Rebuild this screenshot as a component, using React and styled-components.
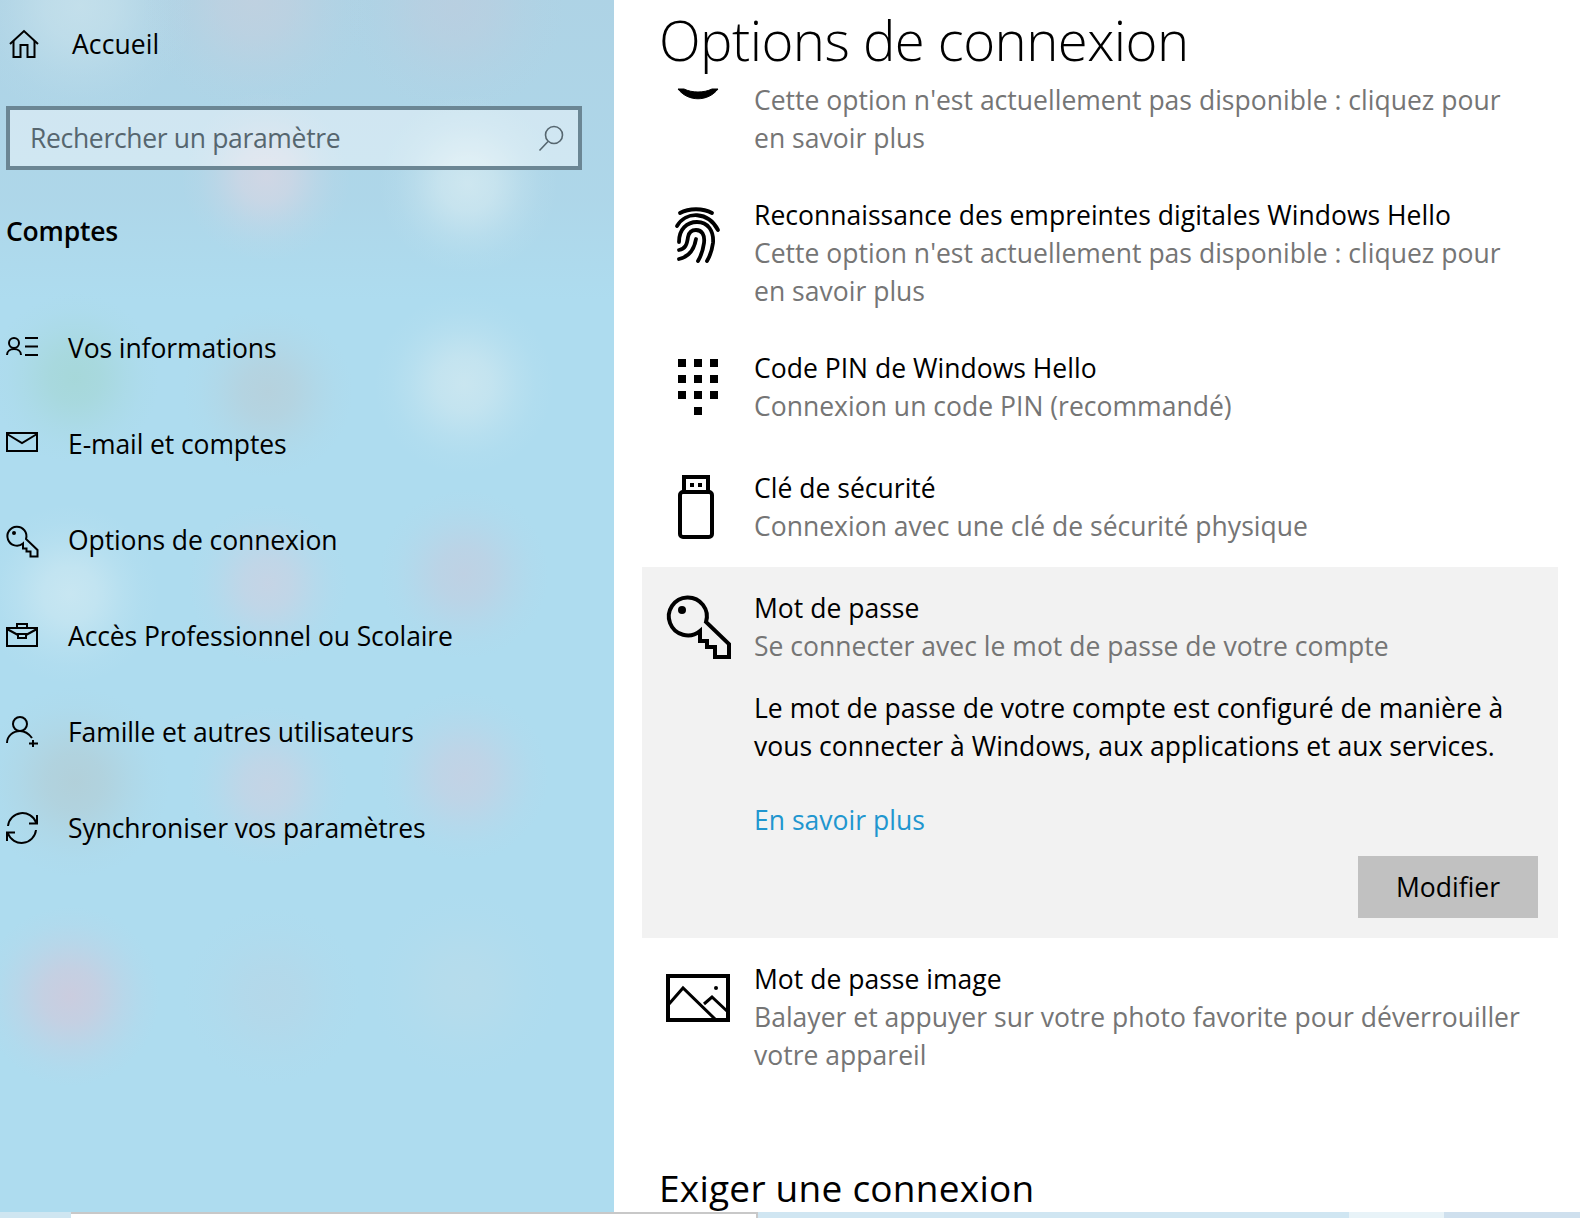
import React from 'react'
import styled, { createGlobalStyle } from 'styled-components'

const FONT = '"Open Sans", "Noto Sans", sans-serif'

const blobs = [
  [266, 176, '226,214,226', 0.65, 85],
  [468, 184, '216,236,242', 0.75, 90],
  [255, 0, '198,208,222', 0.7, 115],
  [455, 6, '190,205,222', 0.65, 110],
  [80, 6, '200,226,236', 0.8, 115],
  [75, 378, '160,212,200', 0.55, 85],
  [268, 392, '186,204,212', 0.65, 85],
  [464, 384, '208,232,240', 0.8, 90],
  [70, 594, '204,232,242', 0.85, 90],
  [268, 584, '210,208,224', 0.65, 80],
  [464, 574, '204,200,218', 0.55, 85],
  [75, 782, '180,200,204', 0.6, 95],
  [268, 786, '208,208,224', 0.65, 80],
  [464, 776, '208,204,222', 0.6, 85],
  [70, 996, '218,196,214', 0.65, 90],
  [272, 996, '186,212,228', 0.5, 90],
  [464, 986, '190,220,232', 0.5, 95],
]

// soft falloff so no blob shows an edge
const softBlob = ([x, y, rgb, alpha, size]) => {
  const stops = [
    [0, 1],
    [30, 0.78],
    [60, 0.32],
    [80, 0.1],
    [100, 0],
  ]
    .map(([at, k]) => `rgba(${rgb},${(alpha * k).toFixed(3)}) ${at}%`)
    .join(', ')
  return `radial-gradient(circle ${size}px at ${x}px ${y}px, ${stops})`
}

const sidebarBackground = [
  ...blobs.map(softBlob),
  'linear-gradient(to bottom, rgba(174,208,226,.75), rgba(174,208,226,.45) 200px, rgba(174,220,239,0) 300px)',
].join(', ')

const GlobalStyle = createGlobalStyle`
  html, body {
    margin: 0;
    padding: 0;
    background: #ffffff;
  }
  body {
    font-family: ${FONT};
    color: #000000;
  }
`

const Page = styled.div`
  width: 1580px;
  height: 1218px;
  display: flex;
  flex-direction: column;
  overflow: hidden;
`

const Window = styled.div`
  flex: 1;
  min-height: 0;
  display: flex;
`

const Sidebar = styled.aside`
  width: 614px;
  flex-shrink: 0;
  padding-left: 6px;
  box-sizing: border-box;
  background-color: #aedcef;
  background-image: ${sidebarBackground};
`

const HomeRow = styled.div`
  height: 88px;
  display: flex;
  align-items: center;
  gap: 33px;
  padding-left: 3px;
  font-size: 26.5px;
  letter-spacing: 0.1px;
`

const SearchBox = styled.div`
  width: 576px;
  height: 64px;
  margin-top: 18px;
  box-sizing: border-box;
  display: flex;
  align-items: center;
  justify-content: space-between;
  padding: 0 14px 0 20px;
  border: 4px solid #6b8694;
  background: rgba(255, 255, 255, 0.42);
  color: #56666f;
  font-size: 26.5px;
  letter-spacing: -0.33px;
`

const SectionLabel = styled.div`
  margin-top: 43px;
  line-height: 37px;
  font-size: 26.5px;
  font-weight: 600;
  letter-spacing: -0.2px;
`

const NavList = styled.nav`
  margin-top: 51px;
  display: flex;
  flex-direction: column;
`

const NavRow = styled.div`
  height: 96px;
  box-sizing: border-box;
  padding-bottom: 2px;
  display: flex;
  align-items: center;
  font-size: 26.5px;
  letter-spacing: -0.1px;
`

const NavIcon = styled.span`
  width: 62px;
  flex-shrink: 0;
  display: flex;
  align-items: center;
  margin-top: ${(p) => p.$shift || 0}px;
`

const Main = styled.main`
  flex: 1;
  min-width: 0;
  padding-left: 28px;
  overflow: hidden;
`

const Title = styled.h1`
  height: 81px;
  margin: 0 0 0 17px;
  line-height: 81px;
  font-size: 54.5px;
  font-weight: 300;
  letter-spacing: -0.55px;
`

const Option = styled.section`
  width: 916px;
  display: flex;
  margin-top: ${(p) => p.$gap || 0}px;
`

const OptionIcon = styled.div`
  width: 112px;
  flex-shrink: 0;
  box-sizing: border-box;
  display: flex;
  justify-content: center;
  align-items: flex-start;
  padding-top: ${(p) => p.$top}px;
  padding-right: ${(p) => p.$nudge || 0}px;
`

const OptionBody = styled.div`
  flex: 1;
  min-width: 0;
  line-height: 38px;
  font-size: 26.5px;
  letter-spacing: 0.02px;
  white-space: nowrap;
`

const OptionName = styled.div``

const OptionHint = styled.div`
  color: #757575;
`

const Selected = styled.div`
  width: 916px;
  height: 371px;
  margin-top: 22px;
  padding-top: 22px;
  box-sizing: border-box;
  background: #f2f2f2;
`

const Explain = styled.p`
  margin: 24px 0 0;
`

const LearnMore = styled.div`
  margin-top: 36px;
  color: #2196cf;
`

const ButtonRow = styled.div`
  margin-top: 17px;
  padding-right: 20px;
  display: flex;
  justify-content: flex-end;
`

const ChangeButton = styled.button`
  width: 180px;
  height: 62px;
  padding: 0;
  border: 0;
  background: #c1c1c1;
  color: #000000;
  font-family: ${FONT};
  font-size: 26.5px;
`

const SubTitle = styled.h2`
  margin: 89px 0 0 17px;
  line-height: 50px;
  font-size: 37px;
  font-weight: 400;
  letter-spacing: 0.25px;
`

const Taskbar = styled.div`
  height: 6px;
  flex-shrink: 0;
  display: flex;
  background: #cfe6f1;
`

const TaskSlot = styled.div`
  width: ${(p) => p.$width}px;
  flex-shrink: 0;
  box-sizing: border-box;
  background: ${(p) => p.$colour};
  border-top: ${(p) => (p.$framed ? '2px solid #c8c8c8' : '0')};
  border-right: ${(p) => (p.$framed ? '2px solid #c8c8c8' : '0')};
`

const Svg = styled.svg`
  display: block;
  flex-shrink: 0;
  fill: none;
  stroke: currentColor;
  overflow: visible;
`

const HomeIcon = () => (
  <Svg width="30" height="28" viewBox="0 0 30 28" strokeWidth="2">
    <path d="M1 14 15 1l14 13" />
    <path d="M4.500 11v16h7V15h7v12h7V11" />
  </Svg>
)

const SearchIcon = () => (
  <Svg width="26" height="26" viewBox="0 0 26 26" strokeWidth="1.6">
    <circle cx="16" cy="10" r="8.500" />
    <path d="M10 16.500 1.500 25.500" />
  </Svg>
)

const PersonListIcon = () => (
  <Svg width="32" height="19" viewBox="0 0 32 19" strokeWidth="2">
    <circle cx="8" cy="6" r="5" />
    <path d="M1 18c0-8 14-8 14 0M19 1h13M19 9.500h13M19 18h13" />
  </Svg>
)

const MailIcon = () => (
  <Svg width="32" height="20" viewBox="0 0 32 20" strokeWidth="2">
    <rect x="1" y="1" width="30" height="18" />
    <path d="M1 2 16 11 31 2" />
  </Svg>
)

const KeyIcon = ({ size }) => (
  <Svg width={size} height={size} viewBox="0 0 64 64" strokeWidth="4">
    <path d="M40 28A19 19 0 1 0 34 37v10h7v6h8v10h14V50Z" />
    <circle cx="16" cy="16" r="4" fill="currentColor" stroke="none" />
  </Svg>
)

const BriefcaseIcon = () => (
  <Svg width="32" height="24" viewBox="0 0 32 24" strokeWidth="2">
    <rect x="1" y="5" width="30" height="18" />
    <path d="M11 5V1h10v4M1 6l11 6M31 6l-11 6" />
    <rect x="12" y="11" width="8" height="4" />
  </Svg>
)

const PersonPlusIcon = () => (
  <Svg width="32" height="31" viewBox="0 0 32 31" strokeWidth="2">
    <circle cx="14" cy="8" r="7" />
    <path d="M1 27c0-7 6-12 13-12 5 0 9 3 12 7M27 24v7M23 27.500h9" />
  </Svg>
)

const SyncIcon = () => (
  <Svg width="32" height="32" viewBox="0 0 32 32" strokeWidth="2">
    <path d="M2 14A14.500 14.500 0 0 1 30 10.500M31 3v8.500h-8" />
    <path d="M30 18A14.500 14.500 0 0 1 2 21.500M1 29v-8.500h8" />
  </Svg>
)

const FaceEdgeIcon = () => (
  <Svg width="40" height="10" viewBox="0 0 40 10" stroke="none">
    <path d="M0 0H6C14 4 26 4 34 0H40C30 13 10 13 0 0Z" fill="currentColor" />
  </Svg>
)

const FingerprintIcon = () => (
  <Svg width="44" height="56" viewBox="0 0 44 56" strokeWidth="3.800" strokeLinecap="round">
    <path d="M4 6C13 1 27 1 36 6" />
    <path d="M1 19C10 4 32 4 42 23" />
    <path d="M3 35C3 22 11 15 21 15 32 15 38 24 37 36 36 43 34 49 31 54" />
    <path d="M3 43C9 42 11 38 12 30 13 25 16 23 20 23 26 23 29 28 28 36 27 43 25 49 22 54" />
    <path d="M3 52C12 50 18 44 20 32" />
  </Svg>
)

const KeypadDot = styled.span`
  width: 8px;
  height: 8px;
  background: #000000;
  grid-column: ${(p) => p.$column || 'auto'};
`

const Keypad = styled.div`
  display: grid;
  grid-template-columns: repeat(3, 8px);
  gap: 8px;
`

const PinIcon = () => (
  <Keypad>
    {Array.from({ length: 9 }, (_, i) => (
      <KeypadDot key={i} />
    ))}
    <KeypadDot $column={2} />
  </Keypad>
)

const UsbIcon = () => (
  <Svg width="36" height="64" viewBox="0 0 36 64" strokeWidth="4">
    <path d="M6 17V2h24v15" />
    <rect x="2" y="17" width="32" height="45" rx="3" />
    <path d="M12 10h4M20 10h4" />
  </Svg>
)

const PictureIcon = () => (
  <Svg width="64" height="48" viewBox="0 0 64 48" strokeWidth="3">
    <rect x="2" y="2" width="60" height="44" strokeWidth="4" />
    <path d="M3 30 17 14 50 46M38 30l8-7 16 15" />
    <circle cx="50" cy="14" r="2" fill="currentColor" stroke="none" />
  </Svg>
)

const navItems = [
  { label: 'Vos informations', icon: <PersonListIcon />, shift: -4 },
  { label: 'E-mail et comptes', icon: <MailIcon />, shift: -4 },
  { label: 'Options de connexion', icon: <KeyIcon size={32} />, shift: 2 },
  { label: 'Accès Professionnel ou Scolaire', icon: <BriefcaseIcon />, shift: -2 },
  { label: 'Famille et autres utilisateurs', icon: <PersonPlusIcon />, shift: -1 },
  { label: 'Synchroniser vos paramètres', icon: <SyncIcon /> },
]

const App = () => {
  return (
    <>
      <GlobalStyle />
      <Page>
        <Window>
          <Sidebar>
            <HomeRow>
              <HomeIcon />
              <span>Accueil</span>
            </HomeRow>
            <SearchBox>
              <span>Rechercher un paramètre</span>
              <SearchIcon />
            </SearchBox>
            <SectionLabel>Comptes</SectionLabel>
            <NavList>
              {navItems.map((item) => (
                <NavRow key={item.label}>
                  <NavIcon $shift={item.shift}>{item.icon}</NavIcon>
                  <span>{item.label}</span>
                </NavRow>
              ))}
            </NavList>
          </Sidebar>
          <Main>
            <Title>Options de connexion</Title>
            <Option>
              <OptionIcon $top={8}>
                <FaceEdgeIcon />
              </OptionIcon>
              <OptionBody>
                <OptionHint>
                  Cette option n'est actuellement pas disponible : cliquez pour
                  <br />
                  en savoir plus
                </OptionHint>
              </OptionBody>
            </Option>
            <Option $gap={39}>
              <OptionIcon $top={11}>
                <FingerprintIcon />
              </OptionIcon>
              <OptionBody>
                <OptionName>Reconnaissance des empreintes digitales Windows Hello</OptionName>
                <OptionHint>
                  Cette option n'est actuellement pas disponible : cliquez pour
                  <br />
                  en savoir plus
                </OptionHint>
              </OptionBody>
            </Option>
            <Option $gap={39}>
              <OptionIcon $top={10}>
                <PinIcon />
              </OptionIcon>
              <OptionBody>
                <OptionName>Code PIN de Windows Hello</OptionName>
                <OptionHint>Connexion un code PIN (recommandé)</OptionHint>
              </OptionBody>
            </Option>
            <Option $gap={44}>
              <OptionIcon $top={6} $nudge={4}>
                <UsbIcon />
              </OptionIcon>
              <OptionBody>
                <OptionName>Clé de sécurité</OptionName>
                <OptionHint>Connexion avec une clé de sécurité physique</OptionHint>
              </OptionBody>
            </Option>
            <Selected>
              <Option>
                <OptionIcon $top={5}>
                  <KeyIcon size={64} />
                </OptionIcon>
                <OptionBody>
                  <OptionName>Mot de passe</OptionName>
                  <OptionHint>Se connecter avec le mot de passe de votre compte</OptionHint>
                  <Explain>
                    Le mot de passe de votre compte est configuré de manière à
                    <br />
                    vous connecter à Windows, aux applications et aux services.
                  </Explain>
                  <LearnMore>En savoir plus</LearnMore>
                  <ButtonRow>
                    <ChangeButton>Modifier</ChangeButton>
                  </ButtonRow>
                </OptionBody>
              </Option>
            </Selected>
            <Option $gap={22}>
              <OptionIcon $top={14}>
                <PictureIcon />
              </OptionIcon>
              <OptionBody>
                <OptionName>Mot de passe image</OptionName>
                <OptionHint>
                  Balayer et appuyer sur votre photo favorite pour déverrouiller
                  <br />
                  votre appareil
                </OptionHint>
              </OptionBody>
            </Option>
            <SubTitle>Exiger une connexion</SubTitle>
          </Main>
        </Window>
        <Taskbar>
          <TaskSlot $width={71} $colour="#cfe6f1" />
          <TaskSlot $width={687} $colour="#ffffff" $framed />
          <TaskSlot $width={591} $colour="#d0e6f2" />
          <TaskSlot $width={95} $colour="#e8f3f8" />
          <TaskSlot $width={136} $colour="#cfe0ee" />
        </Taskbar>
      </Page>
    </>
  )
}

export default App
